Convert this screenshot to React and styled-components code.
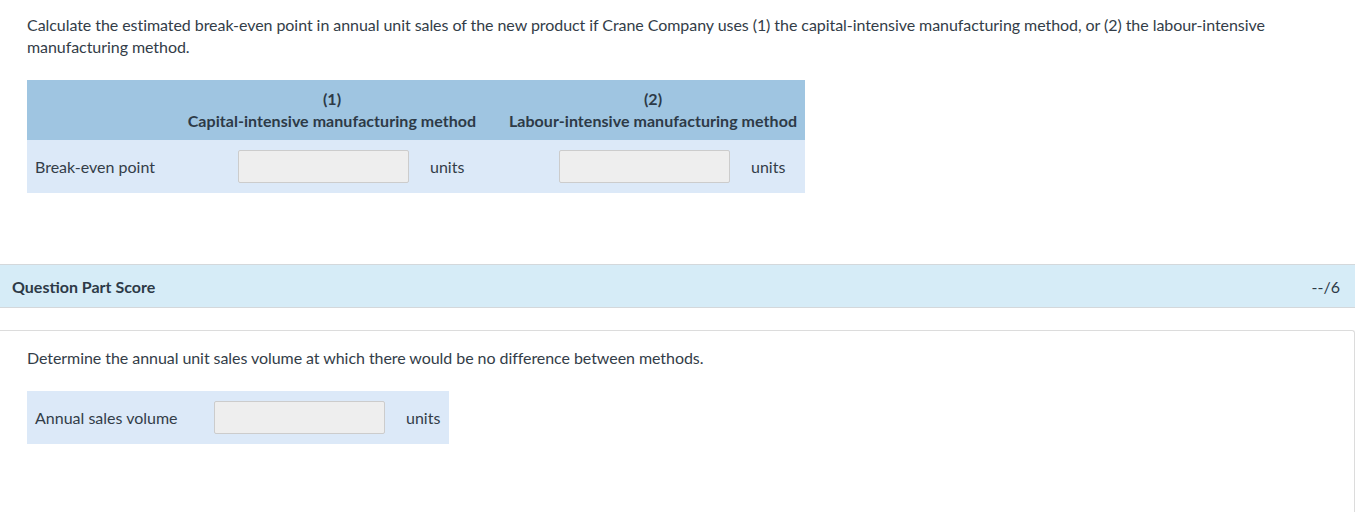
import React from "react";
import styled, { createGlobalStyle } from "styled-components";

const Global = createGlobalStyle`
  html, body { margin: 0; padding: 0; background: #fff; }
  body { font-family: Lato, "Open Sans", sans-serif; color: #2f3b47; font-size: 16px; }
`;

const Page = styled.div`
  width: 1355px;
  height: 512px;
  overflow: hidden;
`;

const Section = styled.div`
  padding: 14px 27px 0 27px;
`;

const Prompt = styled.p`
  margin: 0;
  font-size: 16px;
  line-height: 22px;
  letter-spacing: -0.06px;
  color: #333d48;
`;

const Table = styled.div`
  display: grid;
  grid-template-columns: ${(p) => p.$cols};
  width: ${(p) => p.$width}px;
  margin-top: ${(p) => p.$mt}px;
`;

const HeadCell = styled.div`
  background: #9fc5e1;
  height: 60px;
  display: flex;
  flex-direction: column;
  justify-content: flex-end;
  align-items: center;
  padding-bottom: 8px;
  box-sizing: border-box;
  font-weight: 700;
  font-size: 16px;
  line-height: 22px;
  letter-spacing: 0.05px;
  color: #2d3a47;
  white-space: nowrap;
`;

const BodyCell = styled.div`
  background: #dce9f8;
  height: 53px;
  display: flex;
  align-items: center;
  box-sizing: border-box;
  padding-left: ${(p) => p.$pl || 0}px;
  gap: 21px;
  font-size: 16px;
  color: #333d48;
  white-space: nowrap;
`;

const Input = styled.input`
  width: 171px;
  height: 33px;
  box-sizing: border-box;
  background: #eeeeee;
  border: 1px solid #cccccc;
  border-radius: 2px;
  margin: 0;
  padding: 0 6px;
  font-family: inherit;
`;

const ScoreBar = styled.div`
  margin-top: 71px;
  height: 44px;
  box-sizing: border-box;
  background: #d6ecf7;
  border-top: 1px solid #d4d8db;
  border-bottom: 1px solid #d4d8db;
  display: flex;
  align-items: center;
  justify-content: space-between;
  padding: 0 15px 0 12px;
  font-size: 16px;
  font-weight: 700;
  color: #2d3a47;
`;

const ScoreValue = styled.span`
  font-weight: 400;
  color: #2d3a47;
`;

const NextPart = styled.div`
  margin-top: 22px;
  border-top: 1px solid #dcdcdc;
  border-right: 1px solid #dcdcdc;
  border-top-right-radius: 3px;
  padding: 16px 27px 0 27px;
  height: 200px;
`;

export default function App() {
  return (
    <Page>
      <Global />
      <Section>
        <Prompt>
          Calculate the estimated break-even point in annual unit sales of the new product if Crane Company uses (1) the
          capital-intensive manufacturing method, or (2) the labour-intensive manufacturing method.
        </Prompt>
        <Table $cols="152px 306px 16px 304px" $width={778} $mt={22}>
          <HeadCell />
          <HeadCell>
            <span>(1)</span>
            <span>Capital-intensive manufacturing method</span>
          </HeadCell>
          <HeadCell />
          <HeadCell>
            <span>(2)</span>
            <span>Labour-intensive manufacturing method</span>
          </HeadCell>
          <BodyCell $pl={8}>Break-even point</BodyCell>
          <BodyCell $pl={59}>
            <Input aria-label="Capital-intensive break-even point" />
            units
          </BodyCell>
          <BodyCell />
          <BodyCell $pl={58}>
            <Input aria-label="Labour-intensive break-even point" />
            units
          </BodyCell>
        </Table>
      </Section>
      <ScoreBar>
        <span>Question Part Score</span>
        <ScoreValue>--/6</ScoreValue>
      </ScoreBar>
      <NextPart>
        <Prompt>Determine the annual unit sales volume at which there would be no difference between methods.</Prompt>
        <Table $cols="187px 235px" $width={422} $mt={22}>
          <BodyCell $pl={8}>Annual sales volume</BodyCell>
          <BodyCell>
            <Input aria-label="Annual sales volume" />
            units
          </BodyCell>
        </Table>
      </NextPart>
    </Page>
  );
}
